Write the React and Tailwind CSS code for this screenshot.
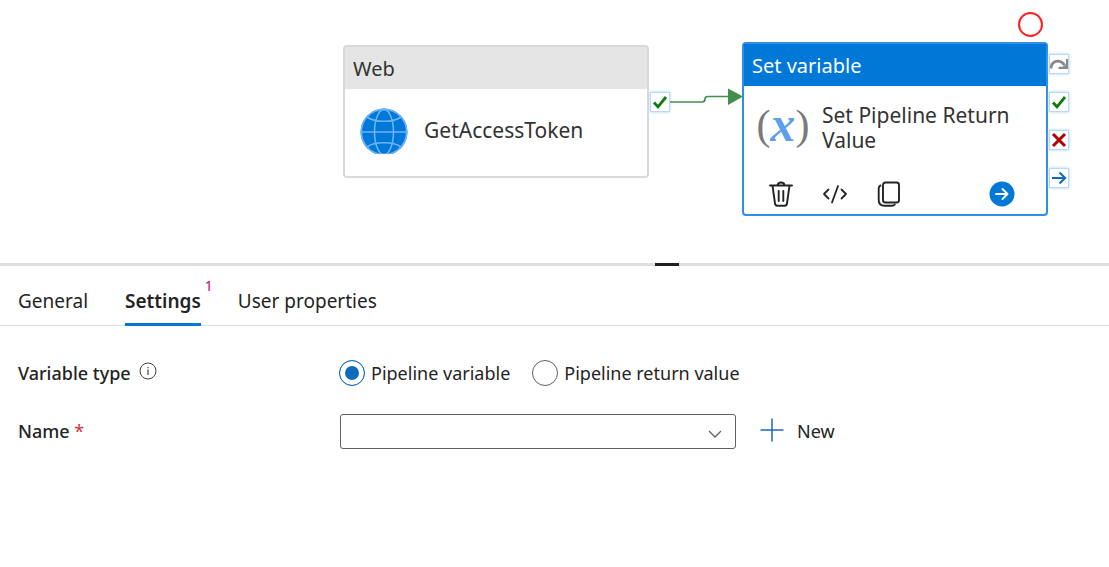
/**
 * Pipeline editor
 *
 * Top: the canvas with the activities and the connector between them.
 * Bottom: the property panel of the selected activity (Settings tab).
 */
import { useState } from "react";

const tabs = [
  { id: "general", label: "General" },
  { id: "settings", label: "Settings", errors: 1 },
  { id: "user", label: "User properties" },
];

const variableTypes = [
  { id: "variable", label: "Pipeline variable" },
  { id: "return", label: "Pipeline return value" },
];

function GlobeIcon() {
  return (
    <svg viewBox="0 0 48 46" className="h-[46px] w-12 shrink-0" fill="none" aria-hidden="true">
      <circle cx="24" cy="24" r="23.5" fill="#0078d7" />
      <g stroke="#6cb2f5" strokeWidth="1.6">
        <circle cx="24" cy="24" r="22.6" />
        <ellipse cx="24" cy="24" rx="9.5" ry="22.6" />
        <path d="M1.5 24h45M7 9c4 3 10 4.300 17 4.300S37 12 41 9M7 39c4-3 10-4.300 17-4.300S37 36 41 39" />
      </g>
    </svg>
  );
}

function VariableIcon() {
  return (
    <svg viewBox="0 0 54 72" className="h-[72px] w-[54px] shrink-0" aria-hidden="true">
      <text x="27" y="47" fontFamily="Liberation Serif, serif" fontSize="42" fill="#7a7a7a" textAnchor="middle">
        (<tspan dy="2" fontSize="50" fontStyle="italic" fontWeight="bold" fill="#5ea0ef">x</tspan><tspan dy="-2">)</tspan>
      </text>
    </svg>
  );
}

function TrashIcon() {
  return (
    <svg viewBox="0 0 26 26" className="size-[26px]" fill="none" stroke="#242424" strokeWidth="1.9" strokeLinecap="round" strokeLinejoin="round" aria-hidden="true">
      <path d="M2 4.500h22M9.500 4.500c0-4 7-4 7 0M4.500 4.500l2.500 18c.2 1.400 1 2.200 2.400 2.200h7.200c1.400 0 2.200-.8 2.400-2.200l2.500-18M10.700 10v10M15.300 10v10" />
    </svg>
  );
}

function CodeIcon() {
  return (
    <svg viewBox="0 0 26 26" className="size-[26px]" fill="none" stroke="#242424" strokeWidth="1.8" strokeLinecap="round" strokeLinejoin="round" aria-hidden="true">
      <path d="M6.500 8.500L2 13l4.500 4.500M19.500 8.500L24 13l-4.500 4.500M16 5L10 21.500" />
    </svg>
  );
}

function CopyIcon() {
  return (
    <svg viewBox="0 0 26 26" className="size-[26px]" fill="none" stroke="#242424" strokeWidth="1.9" strokeLinecap="round" strokeLinejoin="round" aria-hidden="true">
      <rect x="7" y="1.500" width="16" height="20" rx="2.500" />
      <path d="M4.500 4.500C3.300 5 2.700 6 2.700 7.200V19c0 3.800 2 5.700 5.700 5.700H16c1.300 0 2.200-.4 2.800-1.200" />
    </svg>
  );
}

function PortIcon({ kind }) {
  return (
    <svg viewBox="0 0 18 18" className="size-[18px]" fill="none" aria-hidden="true">
      {kind === "skip" && (
        <>
          <path d="M1 13.500C1 5.500 10 3.500 14.500 10" stroke="#8a8a8a" strokeWidth="2.800" />
          <path d="M18 4v10H8.500v-2.200h4.200L16 9V4z" fill="#8a8a8a" />
        </>
      )}
      {kind === "success" && <path d="M3 9.500l4 4.300L15 4" stroke="#107c10" strokeWidth="2.800" />}
      {kind === "failure" && <path d="M3 3l12 12M15 3L3 15" stroke="#b10000" strokeWidth="3" />}
      {kind === "completion" && <path d="M2 9h13M9.500 3.500L15.200 9l-5.700 5.500" stroke="#0f6cbd" strokeWidth="2" />}
    </svg>
  );
}

/* Small square handle on the right edge of an activity */
function Port({ kind }) {
  return (
    <button
      type="button"
      aria-label={`On ${kind}`}
      className="flex size-5 items-center justify-center border border-[#b8d9f7] bg-white shadow-[0_0_3px_#a8d0f5]"
    >
      <PortIcon kind={kind} />
    </button>
  );
}

function Canvas() {
  return (
    <section aria-label="Canvas" className="relative h-[263px] overflow-hidden text-[#333333]">
      {/* Web activity */}
      <article className="absolute left-[343px] top-[45px] w-[306px] rounded-[4px] border-2 border-[#d9d9d9] bg-white">
        <h2 className="bg-[#e5e5e5] px-2 pb-[7px] pt-[9px] text-xl leading-[26px]">Web</h2>
        <div className="flex h-[87px] items-center gap-4 px-[15px] pb-1">
          <GlobeIcon />
          <span className="text-[21px]">GetAccessToken</span>
        </div>
      </article>
      <div className="absolute left-[650px] top-[92px]">
        <Port kind="success" />
      </div>

      {/* Connector */}
      <svg viewBox="0 0 74 20" className="absolute left-[670px] top-[87px] h-5 w-[74px]" fill="none" aria-hidden="true">
        <path d="M0 15h32c2.500 0 3-1 3-3s1-2.500 3-2.500h20" stroke="#438f4d" strokeWidth="1.700" />
        <path d="M58 1.500l15 8-15 8.500z" fill="#438f4d" />
      </svg>

      {/* Set variable activity */}
      <article className="absolute left-[742px] top-[42px] w-[306px] rounded-[4px] border-2 border-[#2f8fe0] bg-white">
        <h2 className="bg-[#0078d7] px-2 pb-[7px] pt-[9px] text-xl leading-[26px] text-white">Set variable</h2>
        <div className="flex h-[83px] items-center gap-3 px-3">
          <VariableIcon />
          <span className="text-[21px] leading-[25px]">Set Pipeline Return Value</span>
        </div>
        <div className="flex h-[45px] items-center gap-7 pl-6 pr-[31px] pt-1">
          <button type="button" aria-label="Delete"><TrashIcon /></button>
          <button type="button" aria-label="View code"><CodeIcon /></button>
          <button type="button" aria-label="Clone"><CopyIcon /></button>
          <button type="button" aria-label="Add output" className="ml-auto">
            <svg viewBox="0 0 26 26" className="size-[26px]" fill="none" aria-hidden="true">
              <circle cx="13" cy="13" r="12.500" fill="#0078d7" />
              <path d="M7 13h11.500M13.500 8l5 5-5 5" stroke="#fff" strokeWidth="1.900" strokeLinecap="round" strokeLinejoin="round" />
            </svg>
          </button>
        </div>
      </article>
      <div className="absolute left-[1049px] top-[54px] flex flex-col gap-[18px]">
        <Port kind="skip" />
        <Port kind="success" />
        <Port kind="failure" />
        <Port kind="completion" />
      </div>

      {/* Breakpoint marker */}
      <button
        type="button"
        aria-label="Toggle breakpoint"
        className="absolute left-[1018px] top-3 size-[25px] rounded-full border-2 border-[#ff1f1f]"
      />
    </section>
  );
}

function App() {
  const [tab, setTab] = useState("settings");
  const [type, setType] = useState("variable");

  return (
    <main className="bg-white font-['Noto_Sans',sans-serif] text-[#242424]">
      <Canvas />

      {/* Splitter */}
      <div className="flex justify-center bg-[#dedede] pl-[225px]">
        <div className="h-[3px] w-6 bg-[#201f1e]" />
      </div>

      {/* Tabs */}
      <nav role="tablist" className="flex h-[60px] items-end gap-[37px] border-b border-[#dedede] pl-[18px] text-[19px]">
        {tabs.map((t) => (
          <button
            key={t.id}
            type="button"
            role="tab"
            aria-selected={tab === t.id}
            onClick={() => setTab(t.id)}
            className={
              tab === t.id
                ? "relative -mb-px h-[46px] border-b-3 border-[#0078d4] font-semibold"
                : "relative -mb-px h-[46px] border-b-3 border-transparent"
            }
          >
            {t.label}
            {t.errors && (
              <span className="absolute -top-1 left-full ml-1 text-sm font-normal text-[#c8007c]">{t.errors}</span>
            )}
          </button>
        ))}
      </nav>

      {/* Settings form */}
      <form className="flex flex-col gap-[23px] px-[18px] pt-[29px] text-[18px]">
        <div className="flex h-9 items-center">
          <span id="type-label" className="flex w-[321px] shrink-0 items-center gap-2 font-medium">
            Variable type
            <svg viewBox="0 0 18 18" className="mb-1 size-[18px]" fill="none" stroke="#424242" aria-hidden="true">
              <circle cx="9" cy="9" r="8" />
              <path d="M9 7.500v5.500M9 5v1.200" strokeWidth="1.200" />
            </svg>
          </span>
          <div role="radiogroup" aria-labelledby="type-label" className="flex gap-[22px]">
            {variableTypes.map((v) => (
              <label key={v.id} className="flex items-center gap-[6px]">
                <input
                  type="radio"
                  name="variableType"
                  checked={type === v.id}
                  onChange={() => setType(v.id)}
                  className="size-[26px] appearance-none rounded-full border border-[#616161] checked:border-[#0f6cbd] checked:bg-[#0f6cbd] checked:shadow-[inset_0_0_0_5px_#ffffff]"
                />
                {v.label}
              </label>
            ))}
          </div>
        </div>

        <div className="flex h-[35px] items-center">
          <label htmlFor="variable-name" className="w-[322px] shrink-0 font-medium">
            Name <span className="font-normal text-[#d13438]">*</span>
          </label>
          <div className="relative w-[396px]">
            <select
              id="variable-name"
              className="block h-[35px] w-full appearance-none rounded-[3px] border border-[#616161] bg-white px-3"
            />
            <svg viewBox="0 0 16 16" className="pointer-events-none absolute right-[13px] top-3 size-4" fill="none" stroke="#616161" strokeWidth="1.300" aria-hidden="true">
              <path d="M2 5l6 6 6-6" />
            </svg>
          </div>
          <button type="button" className="ml-6 flex items-center gap-[13px]">
            <svg viewBox="0 0 24 24" className="mb-1 size-6" stroke="#2266b5" strokeWidth="1.500" aria-hidden="true">
              <path d="M12 .5v23M.5 12h23" />
            </svg>
            New
          </button>
        </div>
      </form>
    </main>
  );
}

export default App;
